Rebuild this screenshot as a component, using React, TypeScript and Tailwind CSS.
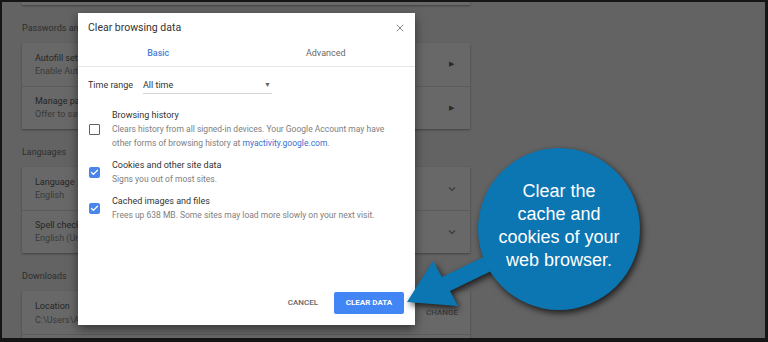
import { X, Check } from 'lucide-react'

// dimmed settings page behind the dialog
function SettingsRow({ title, sub, chevron, divider }: { title: string; sub: string; chevron: 'right' | 'down'; divider?: boolean }) {
    return (
        <div className={`flex items-center h-[43px] pl-[13px] pr-[16px] ${divider ? 'border-t border-[#5c5c5c]' : ''}`}>
            <div className="flex-1 leading-[13px]">
                <p className="text-[9px] text-[#262626]">{title}</p>
                <p className="text-[9px] text-[#3a3a3a]">{sub}</p>
            </div>
            {chevron === 'right' ? (
                <span className="text-[7px] text-[#2a2a2a]">▶</span>
            ) : (
                <svg width="8" height="6" viewBox="0 0 8 6" className="mr-[-2px]">
                    <path d="M1 1.5 L4 4.5 L7 1.5" stroke="#3a3a3a" strokeWidth="1.2" fill="none" />
                </svg>
            )}
        </div>
    )
}

function Heading({ children }: { children: string }) {
    return (
        <div className="h-[38px] flex items-end pb-[9px]">
            <p className="text-[9px] leading-[11px] text-[#2e2e2e]">{children}</p>
        </div>
    )
}

function Card({ children }: { children: React.ReactNode }) {
    return <div className="bg-[#686868] shadow-[0_1px_2px_rgba(0,0,0,0.35)]">{children}</div>
}

function Item({ checked, title, children }: { checked: boolean; title: string; children: React.ReactNode }) {
    return (
        <div className="flex items-center">
            <div className="w-[24px] flex pl-[1px]">
                {checked ? (
                    <div className="w-[11px] h-[11px] rounded-[2px] bg-[#4a85ea] flex items-center justify-center">
                        <Check size={9} strokeWidth={3.5} className="text-white" />
                    </div>
                ) : (
                    <div className="w-[11px] h-[11px] rounded-[1px] border-[1.5px] border-[#5f5f5f]" />
                )}
            </div>
            <div className="flex-1">
                <p className="text-[9px] leading-[13px] text-[#333]">{title}</p>
                <div className="text-[8.5px] leading-[14px] text-[#808080]">{children}</div>
            </div>
        </div>
    )
}

export default function App() {
    return (
        <div className="relative w-[768px] h-[342px] bg-[#151515] pt-[2px] pl-[2px] pr-[3px] pb-[4px] overflow-hidden font-['Roboto',sans-serif]">
            <div className="h-full bg-[#636363] pl-[20px] overflow-hidden">
                <div className="w-[448px]">
                    <div className="h-[3px] bg-[#6a6a6a] shadow-[0_1px_2px_rgba(0,0,0,0.35)]" />
                    <Heading>Passwords and forms</Heading>
                    <Card>
                        <SettingsRow title="Autofill settings" sub="Enable Autofill to fill out forms in a single click" chevron="right" />
                        <SettingsRow title="Manage passwords" sub="Offer to save your web passwords" chevron="right" divider />
                    </Card>
                    <Heading>Languages</Heading>
                    <Card>
                        <SettingsRow title="Language" sub="English" chevron="down" />
                        <SettingsRow title="Spell check" sub="English (United States)" chevron="down" divider />
                    </Card>
                    <Heading>Downloads</Heading>
                    <Card>
                        <div className="flex items-center h-[43px] pl-[13px] pr-[12px]">
                            <div className="flex-1 leading-[14px]">
                                <p className="text-[9px] text-[#262626]">Location</p>
                                <p className="text-[9px] text-[#3a3a3a]">C:\Users\Admin\Downloads</p>
                            </div>
                            <span className="text-[8px] font-medium text-[#3a3a3a]">CHANGE</span>
                        </div>
                        <div className="h-[20px] border-t border-[#5c5c5c]" />
                    </Card>
                </div>
            </div>

            {/* modal dialog */}
            <div className="absolute left-[78px] top-[13px] w-[337px] h-[312px] bg-white shadow-[0_4px_10px_rgba(0,0,0,0.5)] flex flex-col">
                <div className="h-[29px] flex items-center justify-between pl-[10px] pr-[9px]">
                    <span className="text-[10.5px] text-[#333]">Clear browsing data</span>
                    <X size={12} strokeWidth={1.6} className="text-[#666]" />
                </div>
                <div className="h-[25px] grid grid-cols-2 border-b border-[#e6e6e6] text-[9px]">
                    <span className="flex items-center justify-center pr-[8px] text-[#4a7fd6] font-medium">Basic</span>
                    <span className="flex items-center justify-center pr-[10px] text-[#6a6a6a]">Advanced</span>
                </div>
                <div className="mt-[10px] h-[18px] flex items-center pl-[10px]">
                    <span className="w-[55px] text-[9px] text-[#333]">Time range</span>
                    <div className="w-[129px] h-[16px] flex items-center justify-between border-b border-[#d4d4d4] pr-[1px]">
                        <span className="text-[9px] text-[#333]">All time</span>
                        <span className="text-[7px] text-[#666]">▼</span>
                    </div>
                </div>
                <div className="mt-[14px] pl-[10px] pr-[20px] flex flex-col gap-[9px]">
                    <Item checked={false} title="Browsing history">
                        <p>Clears history from all signed-in devices. Your Google Account may have</p>
                        <p>other forms of browsing history at <span className="text-[#3b6fd0]">myactivity.google.com</span>.</p>
                    </Item>
                    <Item checked title="Cookies and other site data">
                        <p>Signs you out of most sites.</p>
                    </Item>
                    <Item checked title="Cached images and files">
                        <p>Frees up 638 MB. Some sites may load more slowly on your next visit.</p>
                    </Item>
                </div>
                <div className="mt-auto flex items-center justify-end pr-[11px] pb-[11px] gap-[16px]">
                    <span className="text-[8px] font-medium text-[#666]">CANCEL</span>
                    <button className="h-[22px] w-[70px] rounded-[2px] bg-[#4285f4] text-white text-[8px] font-bold">CLEAR DATA</button>
                </div>
            </div>

            {/* callout */}
            <svg className="absolute left-0 top-0 drop-shadow-[2px_3px_3px_rgba(0,0,0,0.7)]" width="768" height="342" viewBox="0 0 768 342">
                <polygon points="407,302 433,261 442,277 556,222 563,236 450,291 458,306" fill="#0b76b2" />
                <circle cx="559" cy="229" r="81" fill="#0b76b2" />
            </svg>
            <div className="absolute left-[478px] top-[148px] w-[162px] h-[162px] flex items-center justify-center pb-[7px] text-center text-white text-[18px] leading-[23px] font-['Liberation_Sans',Arial,sans-serif]">
                <p>Clear the<br />cache and<br />cookies of your<br />web browser.</p>
            </div>
        </div>
    )
}
